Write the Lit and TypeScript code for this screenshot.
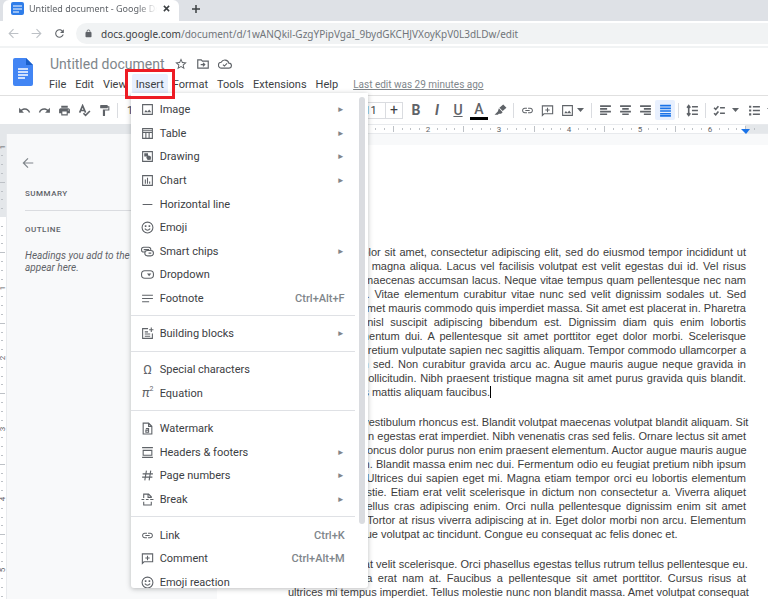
import { LitElement, html, svg, css, nothing, TemplateResult } from "lit";
import { customElement } from "lit/decorators.js";
import { classMap } from "lit/directives/class-map.js";

const fill = (d: string) => svg`<path class="solid" d=${d} />`;
const line = (d: string) => svg`<path class="stroke" d=${d} />`;

const icons: Record<string, unknown> = {
  back: line("M21 12H4M12 4l-8 8 8 8"),
  forward: line("M3 12h17M12 4l8 8-8 8"),
  reload: fill("M17.65 6.35C16.2 4.9 14.21 4 12 4c-4.42 0-7.99 3.58-8 8s3.57 8 8 8c3.73 0 6.84-2.55 7.73-6h-2.08c-.82 2.33-3.04 4-5.65 4-3.31 0-6-2.69-6-6s2.69-6 6-6c1.66 0 3.14.69 4.22 1.78L13 11h7V4l-2.35 2.35z"),
  lock: fill("M18 8h-1V6A5 5 0 0 0 7 6v2H6a2 2 0 0 0-2 2v10c0 1.1.9 2 2 2h12a2 2 0 0 0 2-2V10a2 2 0 0 0-2-2zM9 6a3 3 0 0 1 6 0v2H9z"),
  close: line("M5 5l14 14M19 5L5 19"),
  plus: line("M12 4v16M4 12h16"),
  star: fill("M22 9.24l-7.19-.62L12 2 9.19 8.63 2 9.24l5.46 4.73L5.82 21 12 17.27 18.18 21l-1.63-7.03L22 9.24zM12 15.4l-3.76 2.27 1-4.28-3.32-2.88 4.38-.38L12 6.1l1.71 4.04 4.38.38-3.32 2.88 1 4.28L12 15.4z"),
  move: svg`<path class="stroke" d="M3 5h6l2 2h10v12H3z" /><path class="stroke" d="M8 13h7M12 10l3 3-3 3" />`,
  cloud: svg`<path class="stroke" d="M19 19H6a5 5 0 0 1-.5-10A7 7 0 0 1 18.5 10.5 4.2 4.2 0 0 1 19 19z" /><path class="stroke" d="M8.5 13l2.5 2.5 4.5-4.5" />`,
  undo: fill("M12.5 8c-2.65 0-5.05.99-6.9 2.6L2 7v9h9l-3.62-3.62c1.39-1.16 3.16-1.88 5.12-1.88 3.54 0 6.55 2.31 7.6 5.5l2.37-.78C21.08 11.03 17.15 8 12.5 8z"),
  redo: fill("M18.4 10.6C16.55 8.99 14.15 8 11.5 8c-4.65 0-8.58 3.03-9.96 7.22L3.9 16c1.05-3.19 4.05-5.5 7.6-5.5 1.95 0 3.73.72 5.12 1.88L13 16h9V7l-3.6 3.6z"),
  print: fill("M19 8H5c-1.66 0-3 1.34-3 3v6h4v4h12v-4h4v-6c0-1.66-1.34-3-3-3zm-3 11H8v-5h8v5zm3-7c-.55 0-1-.45-1-1s.45-1 1-1 1 .45 1 1-.45 1-1 1zm-1-9H6v4h12V3z"),
  spell: line("M3 16L8.5 3 14 16M5 12h7M10 17l4 4 8-8"),
  paint: fill("M18 4V3c0-.55-.45-1-1-1H5c-.55 0-1 .45-1 1v4c0 .55.45 1 1 1h12c.55 0 1-.45 1-1V6h1v4H9v11c0 .55.45 1 1 1h2c.55 0 1-.45 1-1v-9h8V4h-3z"),
  marker: fill("M17 1l6 6-7 6-6-6zM9 8l7 7-3 3H9l-2 2H1l6-6z"),
  link: fill("M3.9 12c0-1.71 1.39-3.1 3.1-3.1h4V7H7c-2.76 0-5 2.24-5 5s2.24 5 5 5h4v-1.9H7c-1.71 0-3.1-1.39-3.1-3.1zM8 13h8v-2H8v2zm9-6h-4v1.9h4c1.71 0 3.1 1.39 3.1 3.1s-1.39 3.1-3.1 3.1h-4V17h4c2.76 0 5-2.24 5-5s-2.24-5-5-5z"),
  comment: line("M2.5 21V3.5h19V18H5.5zM12 7v8M8 11h8"),
  image: svg`<path class="stroke" d="M3 3h18v18H3z" /><path class="solid" d="M6 17l3-4 3 3 3-4 4 5z" />`,
  left: line("M2 4h20M2 9h13M2 14h20M2 19h13"),
  center: line("M2 4h20M6 9h12M2 14h20M6 19h12"),
  right: line("M2 4h20M9 9h13M2 14h20M9 19h13"),
  justify: line("M2 3h20M2 8h20M2 13h20M2 18h20M2 22h20"),
  spacing: line("M5 3v18M2 7l3-4 3 4M2 17l3 4 3-4M11 5h11M11 12h11M11 19h11"),
  checks: line("M2 7l3 3 5-6M2 17l3 3 5-6M13 7h9M13 17h9"),
  bullets: svg`<path class="solid" d="M2 3h4v4H2zM2 10h4v4H2zM2 17h4v4H2z" /><path class="stroke" d="M9 5h13M9 12h13M9 19h13" />`,
  table: line("M3 3h18v18H3zM3 7h18M3 10h18M9 10v11M15 10v11"),
  drawing: svg`<path class="stroke" d="M3 3h18v18H3z" /><path class="solid" d="M6 6h7v6H6zM13 12h5v6h-6v-3z" /><circle class="solid" cx="14" cy="14" r="4" />`,
  chart: line("M3 3h18v18H3zM8 10v8M12 7v11M16 14v4"),
  rule: line("M3 12h18"),
  emoji: svg`<circle class="stroke" cx="12" cy="12" r="10" /><path class="solid" d="M7 8h3v3H7zM14 8h3v3h-3z" /><path class="stroke" d="M7 14q5 6 10 0" />`,
  chips: svg`<rect class="stroke" x="1" y="4" width="17" height="9" rx="4" /><path class="stroke" d="M5 8.5h10" /><rect class="stroke knock" x="7" y="10" width="16" height="10" rx="5" /><path class="stroke" d="M14 15h5" />`,
  dropdown: svg`<rect class="stroke" x="1" y="5" width="22" height="14" rx="6" /><path class="solid" d="M11 10h8l-4 5z" />`,
  footnote: line("M2 6h20M2 12h20M2 18h13"),
  blocks: line("M13 3H3v18h18V12M7 9h6M7 13h10M7 17h10M19 1v8M15 5h8"),
  watermark: line("M4 2h10l6 6v14H4zM14 2v6h6M9 12h5v3H9v4h5v-4"),
  headers: line("M2 3h20M4 8h16v9H4zM2 21h20"),
  hash: line("M10 3L7 21M18 3l-3 18M3 9h19M2 15h19"),
  pagebreak: line("M5 9V2h9l5 5v2M13 2v6h6M5 16v6h14v-6M1 12h5M9 12h5M17 12h6"),
};

const icon = (name: string, extra = "") =>
  html`<svg class="icon ${extra}" viewBox="0 0 24 24" aria-hidden="true">${icons[name]}</svg>`;

interface Entry { label: string; icon?: string; glyph?: TemplateResult; sub?: boolean; keys?: string; }

const groups: Entry[][] = [
  [
    { label: "Image", icon: "image", sub: true },
    { label: "Table", icon: "table", sub: true },
    { label: "Drawing", icon: "drawing", sub: true },
    { label: "Chart", icon: "chart", sub: true },
    { label: "Horizontal line", icon: "rule" },
    { label: "Emoji", icon: "emoji" },
    { label: "Smart chips", icon: "chips", sub: true },
    { label: "Dropdown", icon: "dropdown" },
    { label: "Footnote", icon: "footnote", keys: "Ctrl+Alt+F" },
  ],
  [{ label: "Building blocks", icon: "blocks", sub: true }],
  [
    { label: "Special characters", glyph: html`Ω` },
    { label: "Equation", glyph: html`<i>π</i><sup>2</sup>` },
  ],
  [
    { label: "Watermark", icon: "watermark" },
    { label: "Headers & footers", icon: "headers", sub: true },
    { label: "Page numbers", icon: "hash", sub: true },
    { label: "Break", icon: "pagebreak", sub: true },
  ],
  [
    { label: "Link", icon: "link", keys: "Ctrl+K" },
    { label: "Comment", icon: "comment", keys: "Ctrl+Alt+M" },
    { label: "Emoji reaction", icon: "emoji" },
  ],
];

const paragraphs: string[][] = [
  [
    "Lorem ipsum dolor sit amet, consectetur adipiscing elit, sed do eiusmod tempor incididunt ut",
    "labore et dolore magna aliqua. Lacus vel facilisis volutpat est velit egestas dui id. Vel risus",
    "congue viverra maecenas accumsan lacus. Neque vitae tempus quam pellentesque nec nam",
    "aliquam sem et. Vitae elementum curabitur vitae nunc sed velit dignissim sodales ut. Sed",
    "mattis ultricies amet mauris commodo quis imperdiet massa. Sit amet est placerat in. Pharetra",
    "vel turpis non nisl suscipit adipiscing bibendum est. Dignissim diam quis enim lobortis",
    "non nisl condimentum dui. A pellentesque sit amet porttitor eget dolor morbi. Scelerisque",
    "fermentum est pretium vulputate sapien nec sagittis aliquam. Tempor commodo ullamcorper a",
    "arcu dictum non sed. Non curabitur gravida arcu ac. Augue mauris augue neque gravida in",
    "fermentum est sollicitudin. Nibh praesent tristique magna sit amet purus gravida quis blandit.",
    "Turpis eu cursus mattis aliquam faucibus.",
  ],
  [
    "Lectus pretium vestibulum rhoncus est. Blandit volutpat maecenas volutpat blandit aliquam. Sit",
    "eu risus feugiat in egestas erat imperdiet. Nibh venenatis cras sed felis. Ornare lectus sit amet",
    "nunc placerat rhoncus dolor purus non enim praesent elementum. Auctor augue mauris augue",
    "neque gravida in. Blandit massa enim nec dui. Fermentum odio eu feugiat pretium nibh ipsum",
    "consequat nisl. Ultrices dui sapien eget mi. Magna etiam tempor orci eu lobortis elementum",
    "nibh tellus molestie. Etiam erat velit scelerisque in dictum non consectetur a. Viverra aliquet",
    "eget est amet tellus cras adipiscing enim. Orci nulla pellentesque dignissim enim sit amet",
    "venenatis urna. Tortor at risus viverra adipiscing at in. Eget dolor morbi non arcu. Elementum",
    "nibh cursus neque volutpat ac tincidunt. Congue eu consequat ac felis donec et.",
  ],
  [
    "Sagittis nunc erat velit scelerisque. Orci phasellus egestas tellus rutrum tellus pellentesque eu.",
    "At consectetur a erat nam at. Faucibus a pellentesque sit amet porttitor. Cursus risus at",
    "ultrices mi tempus imperdiet. Tellus molestie nunc non blandit massa. Amet volutpat consequat",
  ],
];

const base = css`
  * { box-sizing: border-box; }
  button, input, select { font: inherit; color: inherit; border: 0; background: none; padding: 0; margin: 0; }
  .icon { display: block; flex: none; width: 14px; height: 14px; color: #5f6368; }
  .solid { fill: currentColor; }
  .stroke { fill: none; stroke: currentColor; stroke-width: 2; }
  .knock { fill: #fff; }
`;

@customElement("insert-menu")
export class InsertMenu extends LitElement {
  static styles = [base, css`
    :host { display: block; width: 237px; height: 495px; overflow: hidden; background: #fff; border-radius: 0 0 3px 3px; box-shadow: 0 1px 5px rgba(60, 64, 67, 0.35); color: #3c4043; }
    .scroll { display: flex; align-items: flex-start; padding-top: 5px; }
    .list { flex: 1; display: flex; flex-direction: column; height: 496px; }
    .item { flex: 1; display: flex; align-items: center; width: 100%; padding: 0 10px; gap: 5px; text-align: left; }
    .glyph { width: 14px; font-size: 13px; line-height: 14px; text-align: center; color: #5f6368; white-space: nowrap; }
    .glyph sup { font-size: 7px; line-height: 7px; vertical-align: 6px; }
    .icon { width: 13px; height: 13px; margin-right: 1px; }
    .label { flex: 1; }
    .keys { color: #80868b; font-weight: 500; }
    .arrow { color: #80868b; font-size: 8px; }
    .rule { width: 100%; margin: 5px 0 6px; border: 0; border-top: 1px solid #dfe1e5; }
    .bar { width: 6px; height: 427px; margin: -1px 3px 0 4px; border-radius: 3px; background: #dadce0; }
  `];

  render() {
    return html`<div class="scroll">
      <div class="list" role="menu">
        ${groups.map((g, i) => html`
          ${i ? html`<hr class="rule" />` : nothing}
          ${g.map((e) => html`<button class="item" role="menuitem">
            ${e.icon ? icon(e.icon) : html`<span class="glyph">${e.glyph}</span>`}
            <span class="label">${e.label}</span>
            ${e.keys ? html`<span class="keys">${e.keys}</span>` : nothing}
            ${e.sub ? html`<span class="arrow">►</span>` : nothing}
          </button>`)}`)}
      </div>
      <div class="bar"></div>
    </div>`;
  }
}

const INCH = 70.5;

@customElement("app-root")
export class AppRoot extends LitElement {
  static styles = [base, css`
    :host { display: flex; flex-direction: column; height: 100vh; overflow: hidden; background: #fff; font-family: Roboto, "Liberation Sans", sans-serif; font-size: 11px; color: #3c4043; }
    .tabs { display: flex; height: 21px; flex: none; background: #dee1e6; padding-left: 3px; }
    .tab { display: flex; align-items: center; width: 176px; padding: 0 8px 4px; gap: 5px; background: #fff; border-radius: 6px 6px 0 0; font-family: "Noto Sans", sans-serif; font-size: 9px; color: #5f6368; }
    .tab .name { flex: 1; overflow: hidden; white-space: nowrap; mask-image: linear-gradient(90deg, #000 85%, transparent); }
    .fav { width: 13px; height: 13px; flex: none; }
    .tab .icon { width: 9px; height: 9px; color: #3c4043; }
    .tab .stroke { stroke-width: 4; }
    .new { padding: 0 11px 4px; }
    .new .icon { width: 12px; height: 12px; color: #3c4043; }
    .new .stroke { stroke-width: 3; }
    .nav { display: flex; align-items: center; flex: none; height: 27px; padding-left: 7px; gap: 10px; border-bottom: 2px solid #f1f3f4; }
    .nav .icon { width: 13px; height: 13px; }
    .nav .dim { color: #bdc1c6; }
    .omni { flex: 1; display: flex; align-items: center; gap: 8px; height: 21px; padding-left: 8px; background: #f1f3f4; border-radius: 11px 0 0 11px; font-family: "Noto Sans", sans-serif; font-size: 10px; color: #70757a; white-space: nowrap; }
    .omni .icon { width: 9px; height: 9px; }
    .host { color: #3c4043; }
    .head { display: flex; flex: none; height: 48px; padding: 0 0 0 13px; gap: 11px; border-bottom: 1px solid #e0e0e0; }
    .logo { width: 21px; height: 28px; margin-top: 10px; flex: none; }
    .titles { padding-top: 7px; }
    .title { display: flex; align-items: center; gap: 8px; height: 18px; padding-left: 5px; }
    .doc-name { width: 116px; font-size: 14px; color: #80868b; }
    .menus { display: flex; align-items: center; gap: 1px; height: 20px; margin-top: 1px; white-space: nowrap; }
    .menus button { height: 20px; padding: 0 4px; }
    .open { position: relative; z-index: 2; }
    .menus .on { background: #e8f0fe; border-radius: 2px; }
    .drop { position: absolute; left: -1px; top: 19px; }
    .mark { position: absolute; inset: -5px -7px; border: 3px solid #ed1c24; pointer-events: none; }
    .edited { margin-left: 10px; font-size: 10px; color: #80868b; }
    .bar { display: flex; align-items: center; flex: none; height: 28px; padding-left: 14px; white-space: nowrap; overflow: hidden; }
    .bar > * { flex: none; }
    .set { display: flex; align-items: center; }
    .set.wide { gap: 1px; margin-left: 3px; }
    .bar .tool { display: flex; align-items: center; justify-content: center; width: 20px; height: 20px; color: #5f6368; }
    .bar .tool .icon { width: 13px; height: 13px; color: inherit; }
    .bar .tool .stroke { stroke-width: 3; }
    .bar .tool .thin .stroke { stroke-width: 2; }
    .bar .active { background: #e8f0fe; color: #1a73e8; border-radius: 2px; }
    .bar .letter { font-size: 14px; font-weight: 700; }
    .bar .letter.under { font-weight: 500; text-decoration: underline; }
    .bar .letter.color { height: 18px; line-height: 14px; font-weight: 500; border-bottom: 3px solid #000; width: 18px; margin: 1px 1px 0; }
    .sep { width: 1px; height: 15px; margin: 0 3px; background: #dadce0; }
    .caret { width: 7px; height: 4px; background: #5f6368; clip-path: polygon(0 0, 100% 0, 50% 100%); margin: 0 4px 0 0; }
    .caret.apart { margin: 0 5px 0 3px; }
    .zoom { width: 48px; padding-left: 6px; appearance: none; }
    .style { width: 80px; appearance: none; }
    .font { width: 89px; appearance: none; }
    .step { width: 18px; height: 17px; font-size: 14px; line-height: 13px; }
    .bar .step { border: 1px solid #dadce0; }
    .size { width: 29px; height: 17px; text-align: center; }
    .bar .size { border: 1px solid #dadce0; border-width: 1px 0; }
    .ruler { display: block; flex: none; width: 100%; height: 10px; }
    .work { flex: 1; display: flex; min-height: 0; background: #f8f9fa; }
    .vruler { width: 7px; flex: none; height: 100%; }
    .tick { stroke: #bdc1c6; stroke-width: 1; }
    .num { font-size: 8px; fill: #5f6368; text-anchor: middle; }
    .outline { width: 210px; flex: none; padding: 22px 0 0 18px; color: #5f6368; font-size: 10px; }
    .outline .icon { width: 14px; height: 14px; margin-left: -4px; color: #80868b; }
    .outline h2 { margin: 0; font-size: 8px; line-height: 12px; font-weight: 500; letter-spacing: 0.5px; }
    .outline .summary { margin-top: 16px; padding-bottom: 10px; border-bottom: 1px solid #dadce0; }
    .outline .heads { margin-top: 13px; }
    .outline .hint { margin: 14px 0 0; width: 185px; line-height: 12px; font-style: italic; }
    .page { flex: 1; min-width: 0; margin-top: 11px; padding: 100px 22px 0 71px; background: #fff; font-family: "Liberation Sans", Arial, sans-serif; font-size: 11px; line-height: 14px; color: #3c3c3c; overflow: hidden; }
    .para { margin: 0 0 16px; }
    .line { display: block; white-space: nowrap; text-align: justify; text-align-last: justify; }
    .line.end { text-align-last: left; }
    .cursor { display: inline-block; width: 1px; height: 12px; background: #000; vertical-align: -2px; }
  `];

  private tool(name: string, label: string, cls = "") {
    return html`<button class="tool ${cls}" aria-label=${label}>${icon(name)}</button>`;
  }

  private ruler() {
    const ticks = [];
    for (let i = -8; i < 54; i++) {
      const x = Math.round(287 + (i * INCH) / 8);
      if (i % 8 === 0) {
        if (i > 0) ticks.push(svg`<text class="num" x=${x} y="8">${i / 8}</text>`);
      } else {
        const tall = i % 4 === 0;
        ticks.push(svg`<line class="tick" x1=${x + 0.5} x2=${x + 0.5} y1=${tall ? 2 : 4} y2=${tall ? 8 : 6} />`);
      }
    }
    return html`<svg class="ruler" aria-hidden="true">
      <rect width="100%" height="10" fill="#e4e7ea" /><rect x="288" width="457" height="10" fill="#fff" />
      <rect x="288" width="100%" height="1" fill="#e8eaed" /><rect x="288" y="9" width="100%" height="1" fill="#e8eaed" />
      ${ticks}<path d="M741 5h9l-4 5z" fill="#1a73e8" />
    </svg>`;
  }

  private vruler() {
    const ticks = [];
    for (let i = -8; i < 44; i++) {
      const y = Math.round(83 + (i * INCH) / 8);
      if (i % 8 === 0) {
        if (i !== 0) ticks.push(svg`<text class="num" transform="rotate(-90 5 ${y})" x="5" y=${y}>${Math.abs(i / 8)}</text>`);
      } else ticks.push(svg`<line class="tick" x1=${i % 4 ? 1 : 0} x2=${i % 4 ? 3 : 5} y1=${y + 0.5} y2=${y + 0.5} />`);
    }
    return html`<svg class="vruler" aria-hidden="true"><rect width="7" height="100%" fill="#fff" /><rect width="7" height="83" fill="#e4e7ea" /><rect x="6" width="1" height="100%" fill="#e8eaed" />${ticks}</svg>`;
  }

  render() {
    return html`
      <div class="tabs">
        <div class="tab">
          <svg class="fav" viewBox="0 0 13 13"><rect width="13" height="13" rx="2" fill="#2f7de9" /><path d="M2 4h9M2 7h9M2 10h6" stroke="#fff" /></svg>
          <span class="name">Untitled document - Google Docs</span>
          <button aria-label="Close tab">${icon("close")}</button>
        </div>
        <button class="new" aria-label="New tab">${icon("plus")}</button>
      </div>
      <div class="nav">
        <button aria-label="Back">${icon("back", "dim")}</button>
        <button aria-label="Forward">${icon("forward", "dim")}</button>
        <button aria-label="Reload">${icon("reload")}</button>
        <div class="omni">${icon("lock")}<span><span class="host">docs.google.com</span>/document/d/1wANQkil-GzgYPipVgaI_9bydGKCHJVXoyKpV0L3dLDw/edit</span></div>
      </div>
      <header class="head">
        <svg class="logo" viewBox="0 0 21 28"><path d="M2 0h11l7 7v19a2 2 0 0 1-2 2H2a2 2 0 0 1-2-2V2a2 2 0 0 1 2-2z" fill="#4285f4" /><path d="M13 0l7 7h-7z" fill="#1a5fc8" /><path d="M5 11h10M5 14h10M5 17h10M5 20h7" stroke="#fff" stroke-width="1.5" /></svg>
        <div class="titles">
          <div class="title">
            <input class="doc-name" aria-label="Document name" value="Untitled document" />
            ${icon("star")}${icon("move")}${icon("cloud")}
          </div>
          <nav class="menus">
            <button>File</button><button>Edit</button><button>View</button>
            <div class="open"><button class="on">Insert</button><insert-menu class="drop"></insert-menu><div class="mark"></div></div>
            <button>Format</button><button>Tools</button><button>Extensions</button><button>Help</button>
            <a class="edited" href="#history">Last edit was 29 minutes ago</a>
          </nav>
        </div>
      </header>
      <div class="bar">
        <div class="set">
          ${this.tool("undo", "Undo")}${this.tool("redo", "Redo")}${this.tool("print", "Print")}${this.tool("spell", "Spelling")}${this.tool("paint", "Paint format")}
        </div>
        <span class="sep"></span>
        <select class="zoom" aria-label="Zoom"><option>100%</option></select>
        <select class="style" aria-label="Style"><option>Normal text</option></select>
        <select class="font" aria-label="Font"><option>Arial</option></select>
        <button class="step" aria-label="Smaller">−</button>
        <input class="size" aria-label="Font size" value="11" />
        <button class="step" aria-label="Larger">+</button>
        <div class="set wide">
          <button class="tool letter">B</button>
          <button class="tool letter"><i>I</i></button>
          <button class="tool letter under">U</button>
          <button class="tool letter color">A</button>
          ${this.tool("marker", "Highlight")}
        </div>
        <span class="sep"></span>
        <div class="set">
          ${this.tool("link", "Link")}
          <button class="tool" aria-label="Comment">${icon("comment", "thin")}</button>
          <button class="tool" aria-label="Image">${icon("image", "thin")}</button>
          <span class="caret"></span>
        </div>
        <span class="sep"></span>
        <div class="set">
          ${this.tool("left", "Align left")}${this.tool("center", "Align centre")}${this.tool("right", "Align right")}${this.tool("justify", "Justify", "active")}
        </div>
        <span class="sep"></span>
        ${this.tool("spacing", "Line spacing")}
        <span class="sep"></span>
        ${this.tool("checks", "Checklist")}<span class="caret apart"></span>
        ${this.tool("bullets", "Bulleted list")}<span class="caret apart"></span>
      </div>
      ${this.ruler()}
      <div class="work">
        ${this.vruler()}
        <aside class="outline">
          <button aria-label="Close outline">${icon("back")}</button>
          <h2 class="summary">SUMMARY</h2>
          <h2 class="heads">OUTLINE</h2>
          <p class="hint">Headings you add to the document will appear here.</p>
        </aside>
        <main class="page">
          ${paragraphs.map((p, pi) => html`<p class="para">${p.map((t, i) => {
            const end = i === p.length - 1 && pi < 2;
            return html`<span class=${classMap({ line: true, end })}>${t}${end && pi === 0 ? html`<span class="cursor"></span>` : nothing}</span>`;
          })}</p>`)}
        </main>
      </div>`;
  }
}
